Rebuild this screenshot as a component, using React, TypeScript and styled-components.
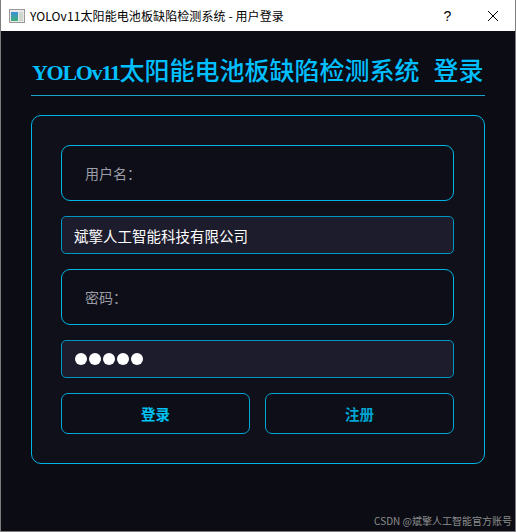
import styled, { createGlobalStyle } from "styled-components";

const GlobalStyle = createGlobalStyle`
  html, body {
    margin: 0;
    padding: 0;
    background: #0b0c14;
  }
  * { box-sizing: border-box; }
`

const CJK = `"Noto Sans CJK SC", "Liberation Sans", sans-serif`

const Window = styled.div`
  width: 516px;
  height: 532px;
  display: flex;
  flex-direction: column;
  border: 1px solid #7d7d7d;
  border-top: none;
  background: #0b0c14;
  font-family: ${CJK};
`

const TitleBar = styled.div`
  height: 31px;
  flex: none;
  background: #ffffff;
  display: flex;
  align-items: center;
  padding-left: 8px;
  color: #000;
  font-size: 12px;
`

const TitleText = styled.span`
  margin-left: 5px;
  flex: 1;
  letter-spacing: 0.1px;
`

const TitleBtn = styled.div`
  width: 45px;
  height: 31px;
  display: flex;
  align-items: center;
  justify-content: center;
  font-family: "Liberation Sans", sans-serif;
  font-size: 14px;
`

const Content = styled.div`
  flex: 1;
  display: flex;
  flex-direction: column;
  padding: 0 30px 3px 30px;
`

const Heading = styled.h1`
  margin: 21px 0 0;
  padding: 0 0 5px 1px;
  border-bottom: 1px solid #1ba3cf;
  color: #00bfff;
  font-family: ${CJK};
  font-weight: 500;
  font-size: 25px;
  line-height: 34px;
  white-space: nowrap;
`

const Latin = styled.span`
  font-family: "Liberation Serif", serif;
  font-size: 22px;
  font-weight: 700;
  letter-spacing: -1.3px;
`

const Tail = styled.span`
  margin-left: 14px;
`

const Card = styled.div`
  margin-top: 19px;
  border: 1px solid #00b4e6;
  border-radius: 10px;
  background: #0f101a;
  padding: 29px 30px 29px 29px;
  display: flex;
  flex-direction: column;
  gap: 15px;
`

const LabelBox = styled.div`
  height: 56px;
  border: 1px solid #00b4e6;
  border-radius: 9px;
  background: #0d0e17;
  display: flex;
  align-items: center;
  padding-left: 23px;
  color: #9c9ca8;
  font-size: 14px;
`

const Field = styled.div`
  height: 38px;
  border: 1px solid #0096c4;
  border-radius: 5px;
  background: #1c1c2c;
  display: flex;
  align-items: center;
  padding-left: 12px;
  color: #ffffff;
  font-size: 14.5px;
`

const Dots = styled.div`
  display: flex;
  gap: 2px;
  padding-left: 1px;
`

const Dot = styled.span`
  width: 12px;
  height: 12px;
  border-radius: 50%;
  background: #ffffff;
`

const ButtonRow = styled.div`
  display: grid;
  grid-template-columns: 1fr 1fr;
  gap: 15px;
`

const Button = styled.button<{ $dim?: boolean }>`
  height: 41px;
  border: 1px solid #00a8d8;
  border-radius: 7px;
  background: #0d0e17;
  color: ${p => (p.$dim ? "#00a4d0" : "#00c3f5")};
  font-family: ${CJK};
  font-weight: 700;
  font-size: 14.5px;
  cursor: pointer;
`

const Watermark = styled.div`
  margin-top: auto;
  margin-right: -27px;
  align-self: flex-end;
  color: #8c8c8c;
  font-size: 10px;
  font-family: ${CJK};
`

function AppIcon() {
  return (
    <svg width="16" height="14" viewBox="0 0 16 14">
      <rect x="0.5" y="0.5" width="15" height="13" fill="#e8e8e8" stroke="#9a9a9a" />
      <defs>
        <linearGradient id="ic" x1="0" y1="0" x2="0" y2="1">
          <stop offset="0" stopColor="#3a8fd8" />
          <stop offset="1" stopColor="#3fb07a" />
        </linearGradient>
      </defs>
      <rect x="2" y="3" width="7" height="9" fill="url(#ic)" />
      <rect x="10" y="3" width="4" height="9" fill="#cfd8cf" />
    </svg>
  )
}

export default function App() {
  return (
    <>
      <GlobalStyle />
      <Window>
        <TitleBar>
          <AppIcon />
          <TitleText>YOLOv11太阳能电池板缺陷检测系统 - 用户登录</TitleText>
          <TitleBtn>?</TitleBtn>
          <TitleBtn>
            <svg width="12" height="12" viewBox="0 0 12 12">
              <path d="M1 1L11 11M11 1L1 11" stroke="#000" strokeWidth="1" />
            </svg>
          </TitleBtn>
        </TitleBar>
        <Content>
          <Heading>
            <Latin>YOLOv11</Latin>太阳能电池板缺陷检测系统<Tail>登录</Tail>
          </Heading>
          <Card>
            <LabelBox>用户名：</LabelBox>
            <Field>斌擎人工智能科技有限公司</Field>
            <LabelBox>密码：</LabelBox>
            <Field>
              <Dots>
                {[0, 1, 2, 3, 4].map(i => <Dot key={i} />)}
              </Dots>
            </Field>
            <ButtonRow>
              <Button>登录</Button>
              <Button $dim>注册</Button>
            </ButtonRow>
          </Card>
          <Watermark>CSDN @斌擎人工智能官方账号</Watermark>
        </Content>
      </Window>
    </>
  )
}
